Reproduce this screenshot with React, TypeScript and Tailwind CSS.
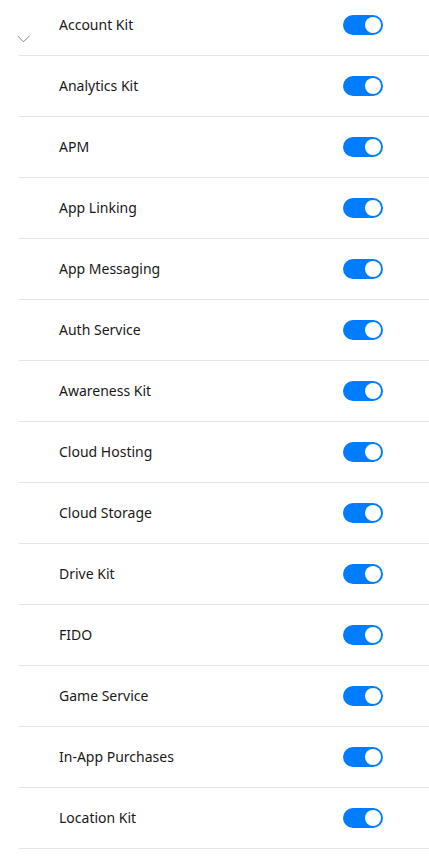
const items = [
  "Account Kit",
  "Analytics Kit",
  "APM",
  "App Linking",
  "App Messaging",
  "Auth Service",
  "Awareness Kit",
  "Cloud Hosting",
  "Cloud Storage",
  "Drive Kit",
  "FIDO",
  "Game Service",
  "In-App Purchases",
  "Location Kit",
];

function Toggle() {
  return (
    <div className="relative -mt-[1px] h-5 w-10 rounded-full bg-[#007dff]">
      <span className="absolute right-[2px] top-[2px] h-4 w-4 rounded-full bg-white" />
    </div>
  );
}

export default function App() {
  return (
    <div className="min-h-screen bg-white font-['Noto_Sans',sans-serif] text-[14px] text-[#191919]">
      <div className="relative -mt-[5px] pl-[19px]">
        <svg
          className="absolute left-[17px] top-[40px]"
          width="13"
          height="8"
          viewBox="0 0 13 8"
          fill="none"
        >
          <path d="M0.5 0.8 L6.5 6.8 L12.5 0.8" stroke="#8a8a8a" strokeWidth="1" />
        </svg>
        {items.map((name) => (
          <div
            key={name}
            className="flex h-[61px] items-center justify-between border-b border-[#e5e5e5] pl-[40px] pr-[46px]"
          >
            <span className="-mt-[1px]">{name}</span>
            <Toggle />
          </div>
        ))}
      </div>
    </div>
  );
}
